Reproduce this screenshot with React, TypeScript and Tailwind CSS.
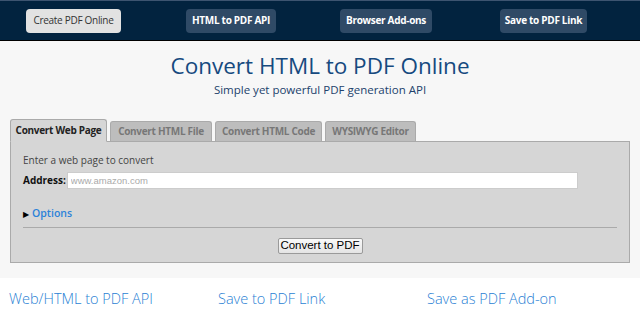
import { useState } from 'react';

const navItems = [
  { label: 'Create PDF Online', cls: 'ml-[26px] w-[95px]' },
  { label: 'HTML to PDF API', cls: 'ml-[65px] w-[90px]' },
  { label: 'Browser Add-ons', cls: 'ml-[64px] w-[92px]' },
  { label: 'Save to PDF Link', cls: 'ml-[68px] w-[87px]' },
];
const tabs = [
  { label: 'Convert Web Page', cls: 'w-[97px]' },
  { label: 'Convert HTML File', cls: 'w-[102px]' },
  { label: 'Convert HTML Code', cls: 'w-[107px]' },
  { label: 'WYSIWYG Editor', cls: 'w-[91px]' },
];
const footerLinks = ['Web/HTML to PDF API', 'Save to PDF Link', 'Save as PDF Add-on'];

export default function App() {
  const [activeTab, setActiveTab] = useState(0);
  const [address, setAddress] = useState('');

  return (
    <div className="w-[640px] h-[312px] overflow-hidden bg-[#f7f7f7] font-['Open_Sans',sans-serif]">
      {/* top navigation */}
      <div className="h-[41px] bg-[#02233f] border-t border-[#3d5470] border-b border-b-black flex items-center">
        {navItems.map((item, i) => (
          <button
            key={item.label}
            className={`${item.cls} h-[24px] rounded-[4px] text-[10px] tracking-[-0.3px] whitespace-nowrap ${
              i === 0
                ? 'bg-[#e2e2e2] text-[#333] font-normal'
                : 'bg-[#2f4a66] text-white font-bold'
            }`}
          >
            {item.label}
          </button>
        ))}
      </div>

      {/* heading */}
      <div className="text-center pt-[10px]">
        <h1 className="text-[22.5px] leading-[30px] text-[#164a7f]">Convert HTML to PDF Online</h1>
        <p className="text-[11.5px] leading-[16px] text-[#22426c] mt-[1px]">Simple yet powerful PDF generation API</p>
      </div>

      {/* converter */}
      <div className="px-[10px] mt-[21px]">
        <div className="flex items-end gap-[3px] h-[22px]">
          {tabs.map((tab, i) => (
            <button
              key={tab.label}
              onClick={() => setActiveTab(i)}
              className={`${tab.cls} text-[10px] font-bold tracking-[-0.3px] whitespace-nowrap rounded-t-[3px] border border-[#aaa] ${
                i === activeTab
                  ? 'h-[23px] bg-[#d6d6d6] text-[#222] border-b-[#d6d6d6] relative top-[1px]'
                  : 'h-[20px] bg-[#bdbdbd] text-[#777] border-b-0'
              }`}
            >
              {tab.label}
            </button>
          ))}
        </div>
        <div className="bg-[#d6d6d6] border border-[#aaa] h-[122px] px-[12px] pt-[11px]">
          <div className="text-[10px] text-[#444]">Enter a web page to convert</div>
          <div className="flex items-center mt-[4px]">
            <label className="text-[10px] font-bold text-[#111] mr-[1px]">Address:</label>
            <input
              value={address}
              onChange={(e) => setAddress(e.target.value)}
              placeholder="www.amazon.com"
              className="w-[511px] h-[17px] bg-white border border-[#ccc] px-[3px] text-[9.5px] font-['Liberation_Sans',sans-serif] placeholder:text-[#aaa] outline-none"
            />
          </div>
          <div className="flex items-center mt-[17px]">
            <span className="text-[8px] text-black mr-[3px]">&#9654;</span>
            <a className="text-[10.5px] text-[#2b82d9] font-semibold">Options</a>
          </div>
          <div className="border-t border-[#aaa] mt-[5px]" />
          <div className="flex justify-center mt-[10px]">
            <button className="h-[16px] w-[85px] border border-[#9a9a9a] rounded-[2px] bg-gradient-to-b from-[#fafafa] to-[#e4e4e4] text-[11.5px] leading-none text-black font-['Liberation_Sans',sans-serif]">
              Convert to PDF
            </button>
          </div>
        </div>
      </div>

      {/* footer links */}
      <div className="bg-white mt-[15px] h-[40px] px-[9px] pt-[10px]">
        <div className="grid grid-cols-3 w-[627px]">
          {footerLinks.map((link) => (
            <a key={link} className="text-[14.5px] text-[#2a7fd4] font-light">
              {link}
            </a>
          ))}
        </div>
      </div>
    </div>
  );
}
